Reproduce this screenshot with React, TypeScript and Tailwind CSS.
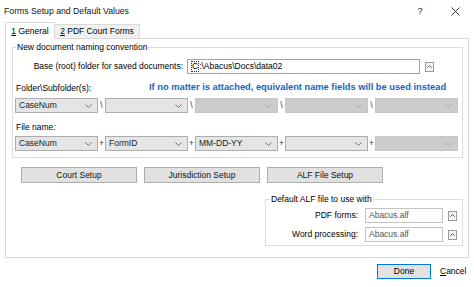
import React from "react";

const Chevron = ({ color = "#606060" }: { color?: string }) => (
    <svg width="7" height="4" viewBox="0 0 7 4" className="shrink-0">
        <polyline points="0.5,0.5 3.5,3.5 6.5,0.5" fill="none" stroke={color} strokeWidth="1" />
    </svg>
);

function Combo({ value = "", disabled = false }: { value?: string; disabled?: boolean }) {
    return (
        <div
            className={
                disabled
                    ? "w-[83px] h-[15px] flex items-center justify-end pr-[5px] border border-[#c6c6c6] bg-[#cccccc]"
                    : "w-[83px] h-[15px] flex items-center pl-[3px] pr-[5px] border border-[#adadad] bg-[#e5e5e5] text-[#222]"
            }
        >
            {!disabled && <span className="flex-1 truncate">{value}</span>}
            <Chevron color={disabled ? "#a8a8a8" : "#707070"} />
        </div>
    );
}

function Sep({ ch }: { ch: string }) {
    return <span className="w-[7px] text-center text-[#333]">{ch}</span>;
}

function UpButton() {
    return (
        <div className="w-[9px] h-[10px] flex items-center justify-center border border-[#9a9a9a] bg-[#f4f4f4]">
            <svg width="5" height="3" viewBox="0 0 5 3">
                <polyline points="0.3,2.7 2.5,0.5 4.7,2.7" fill="none" stroke="#444" strokeWidth="0.9" />
            </svg>
        </div>
    );
}

function PushButton({ label }: { label: string }) {
    return (
        <div className="w-[116px] h-[16px] flex items-center justify-center border border-[#adadad] bg-[#e1e1e1] text-[#111]">
            {label}
        </div>
    );
}

export default function App() {
    return (
        <div className="w-[474px] h-[287px] bg-white text-black font-['Liberation_Sans',Arial,sans-serif] text-[8.5px] leading-none flex flex-col overflow-hidden">
            {/* title bar */}
            <div className="h-[22px] flex items-center pl-[4px] pr-[4px]">
                <span className="text-[8.7px] text-[#111]">Forms Setup and Default Values</span>
                <div className="ml-auto flex gap-[5px]">
                    <span className="w-[30px] text-center text-[9px] text-[#222]">?</span>
                    <span className="w-[30px] flex justify-center">
                        <svg width="9" height="9" viewBox="0 0 9 9">
                            <path d="M0.5 0.5 L8.5 8.5 M8.5 0.5 L0.5 8.5" stroke="#222" strokeWidth="0.9" />
                        </svg>
                    </span>
                </div>
            </div>

            {/* tabs */}
            <div className="h-[16px] ml-[5px] flex items-end relative z-10">
                <div className="w-[50px] h-[17px] -mb-px border border-b-0 border-[#d9d9d9] bg-white flex items-center justify-center">
                    <span>
                        <span className="underline">1</span> General
                    </span>
                </div>
                <div className="w-[85px] h-[14px] border border-l-0 border-b-0 border-[#d9d9d9] bg-[#f0f0f0] flex items-center justify-center">
                    <span>
                        <span className="underline">2</span> PDF Court Forms
                    </span>
                </div>
            </div>

            {/* tab panel */}
            <div className="mx-[5px] h-[220px] border border-[#d9d9d9]">
                <div className="w-[451px] ml-[6px] flex flex-col">
                    <fieldset className="mt-[3px] border border-[#dcdcdc] pb-[6px]">
                        <legend className="ml-[3px] px-[1px] leading-[10px]">New document naming convention</legend>

                        <div className="mt-[7px] h-[15px] flex items-center">
                            <span className="w-[170px] text-right">Base (root) folder for saved documents:</span>
                            <div className="ml-[4px] w-[233px] h-[15px] flex items-center pl-[3px] border border-[#7dbd7d] bg-white">
                                <span className="border border-dotted border-[#333] leading-[9px]">C</span>
                                <span>:\Abacus\Docs\data02</span>
                            </div>
                            <div className="ml-[5px]">
                                <UpButton />
                            </div>
                        </div>

                        <div className="mt-[8px] h-[12px] flex items-center">
                            <span className="ml-[3px] w-[133px]">Folder\Subfolder(s):</span>
                            <span className="text-[9.3px] font-bold text-[#1565c8] whitespace-nowrap">
                                If no matter is attached, equivalent name fields will be used instead
                            </span>
                        </div>

                        <div className="mt-[4px] pl-[2px] flex items-center">
                            <Combo value="CaseNum" />
                            <Sep ch="\" />
                            <Combo />
                            <Sep ch="\" />
                            <Combo disabled />
                            <Sep ch="\" />
                            <Combo disabled />
                            <Sep ch="\" />
                            <Combo disabled />
                        </div>

                        <div className="mt-[8px] h-[12px] flex items-center">
                            <span className="ml-[3px]">File name:</span>
                        </div>

                        <div className="mt-[3px] pl-[2px] flex items-center">
                            <Combo value="CaseNum" />
                            <Sep ch="+" />
                            <Combo value="FormID" />
                            <Sep ch="+" />
                            <Combo value="MM-DD-YY" />
                            <Sep ch="+" />
                            <Combo />
                            <Sep ch="+" />
                            <Combo disabled />
                        </div>
                    </fieldset>

                    <div className="mt-[9px] pl-[9px] flex gap-[7px]">
                        <PushButton label="Court Setup" />
                        <PushButton label="Jurisdiction Setup" />
                        <PushButton label="ALF File Setup" />
                    </div>

                    <fieldset className="mt-[11px] ml-auto w-[198px] border border-[#dcdcdc] pb-[3px]">
                        <legend className="ml-[4px] px-[1px] leading-[10px]">Default ALF file to use with</legend>
                        <div className="mt-[4px] h-[15px] flex items-center">
                            <span className="w-[92px] text-right">PDF forms:</span>
                            <div className="ml-[7px] w-[78px] h-[15px] flex items-center pl-[3px] border border-[#c4c4c4] text-[#555]">
                                Abacus.alf
                            </div>
                            <div className="ml-[5px]">
                                <UpButton />
                            </div>
                        </div>
                        <div className="mt-[4px] h-[15px] flex items-center">
                            <span className="w-[92px] text-right">Word processing:</span>
                            <div className="ml-[7px] w-[78px] h-[15px] flex items-center pl-[3px] border border-[#c4c4c4] text-[#555]">
                                Abacus.alf
                            </div>
                            <div className="ml-[5px]">
                                <UpButton />
                            </div>
                        </div>
                    </fieldset>
                </div>
            </div>

            {/* footer */}
            <div className="mt-[6px] flex items-center">
                <div className="ml-[377px] w-[54px] h-[15px] flex items-center justify-center border border-[#0078d7] bg-[#e1e1e1]">
                    Done
                </div>
                <span className="ml-[9px]">
                    <span className="underline">C</span>ancel
                </span>
            </div>
        </div>
    );
}
